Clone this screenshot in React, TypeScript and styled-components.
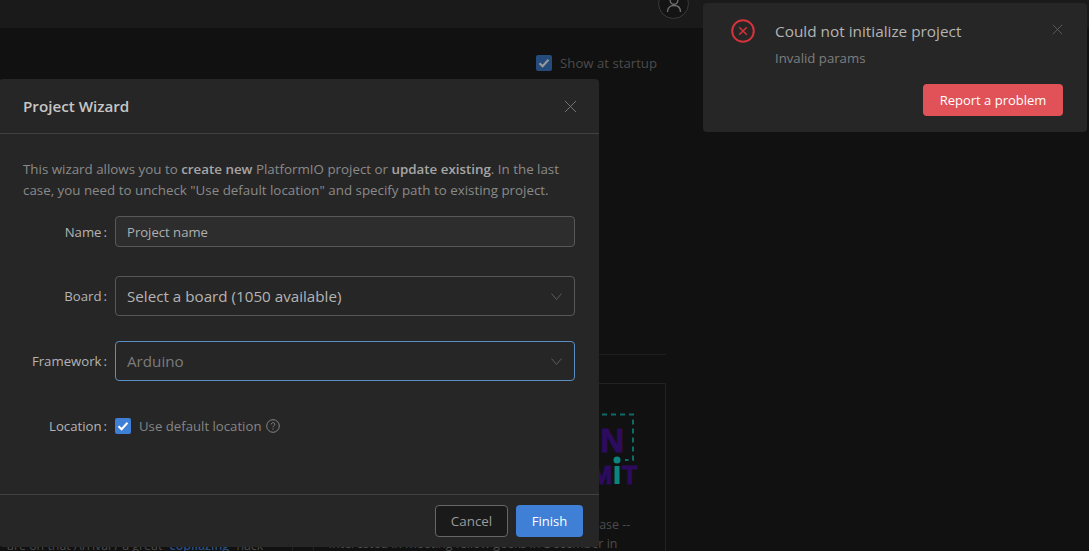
import React from "react";
import styled, { createGlobalStyle } from "styled-components";

const Global = createGlobalStyle`
  html, body { margin: 0; padding: 0; background: #111; }
  #root { height: 551px; }
  * { box-sizing: border-box; }
`;

const Page = styled.div`
  position: relative;
  width: 1089px;
  height: 551px;
  overflow: hidden;
  background: #111111;
  font-family: "Open Sans", "Noto Sans", sans-serif;
  font-size: 13.2px;
`;

const TopBar = styled.header`
  display: flex;
  justify-content: flex-end;
  align-items: flex-end;
  height: 28px;
  padding: 0 400px 9px 0;
  background: #1a1a1a;
  overflow: hidden;
`;

const Avatar = styled.div`
  display: flex;
  flex: none;
  align-items: center;
  justify-content: center;
  width: 31px;
  height: 31px;
  border: 1px solid #3a3a3a;
  border-radius: 50%;
  background: #141414;
  color: #6e6e6e;
`;

const Main = styled.main`
  width: 666px;
  padding-top: 27px;
`;

const StartupRow = styled.label`
  display: flex;
  align-items: center;
  justify-content: flex-end;
  gap: 8px;
  height: 16px;
  padding-right: 9px;
  color: #4c4c4c;
  font-size: 13.2px;
`;

const Check = styled.span<{ $dim?: boolean }>`
  display: flex;
  flex: none;
  align-items: center;
  justify-content: center;
  width: 16px;
  height: 16px;
  border-radius: 2px;
  background: ${(p) => (p.$dim ? "#254a7c" : "#3f7fd6")};
  color: ${(p) => (p.$dim ? "#9a9a9a" : "#ffffff")};
`;

const Divider = styled.hr`
  margin: 283px 0 28px;
  border: 0;
  border-top: 1px solid #1f1f1f;
`;

const NewsGrid = styled.section`
  display: grid;
  grid-template-columns: 293px 373px;
  grid-template-rows: 170px;
`;

const NewsCard = styled.article`
  padding: 153px 0 0 7px;
  border-right: 1px solid #222222;
  color: #4c4c4c;
  font-size: 12.4px;
  line-height: 19px;
`;

const BoxedCard = styled.article`
  display: flex;
  flex-direction: column;
  justify-content: flex-end;
  margin-left: 20px;
  padding: 0 24px 0 15px;
  border-top: 1px solid #222222;
  border-left: 1px solid #222222;
  border-right: 1px solid #222222;
  color: #4c4c4c;
  font-size: 12.4px;
  line-height: 19px;
`;

const LogoWrap = styled.div`
  display: flex;
  justify-content: flex-end;
  margin: 0 2px 24px 0;
`;

const NewsText = styled.p`
  margin: 0;
  white-space: nowrap;
`;

const NewsLink = styled.a`
  color: #2a4f82;
  font-weight: 600;
`;

const Dialog = styled.section`
  position: absolute;
  top: 79px;
  left: -1px;
  display: flex;
  flex-direction: column;
  width: 600px;
  height: 468px;
  border-radius: 4px;
  background: #262626;
  color: #c8c8c8;
`;

const DialogHeader = styled.div`
  display: flex;
  align-items: center;
  justify-content: space-between;
  height: 55px;
  padding: 0 22px 0 24px;
  border-bottom: 1px solid #414141;
`;

const DialogTitle = styled.h2`
  margin: 0;
  color: #c6c6c6;
  font-size: 15.2px;
  font-weight: 600;
`;

const IconButton = styled.button<{ $color: string }>`
  display: flex;
  padding: 0;
  border: 0;
  background: none;
  color: ${(p) => p.$color};
`;

const DialogBody = styled.div`
  flex: 1;
  padding: 25px 24px 0;
`;

const Intro = styled.p`
  margin: 0 0 15px;
  color: #8a8a8a;
  font-size: 13.35px;
  line-height: 21px;
  white-space: nowrap;

  strong {
    color: #a6a6a6;
    font-weight: 600;
  }
`;

const FormRow = styled.div<{ $mb: number; $mt?: number }>`
  display: flex;
  align-items: center;
  margin-top: ${(p) => p.$mt ?? 0}px;
  margin-bottom: ${(p) => p.$mb}px;
`;

const FieldLabel = styled.label`
  flex: none;
  width: 92px;
  margin-right: 8px;
  margin-left: -8px;
  color: #b4b4b4;
  font-size: 13.2px;
  text-align: right;
`;

const Colon = styled.span`
  margin-left: 2px;
`;

const TextInput = styled.div`
  display: flex;
  align-items: center;
  width: 460px;
  height: 31px;
  padding: 0 11px;
  border: 1px solid #585858;
  border-radius: 4px;
  background: #2d2d2d;
  color: #b0b0b0;
  font-size: 13.1px;
`;

const SelectBox = styled.div<{ $focused?: boolean }>`
  display: flex;
  align-items: center;
  justify-content: space-between;
  width: 460px;
  height: 40px;
  padding: 0 12px 0 11px;
  border: 1px solid ${(p) => (p.$focused ? "#5b8cc2" : "#585858")};
  border-radius: 4px;
  color: ${(p) => (p.$focused ? "#7b7b7b" : "#b4b4b4")};
  font-size: 15.2px;
`;

const Chevron = styled.span`
  display: flex;
  color: #5a5a5a;
`;

const CheckLine = styled.div`
  display: flex;
  align-items: center;
  gap: 8px;
  color: #858585;
  font-size: 13.2px;
`;

const HelpIcon = styled.span`
  display: flex;
  margin-left: -3px;
  color: #858585;
`;

const DialogFooter = styled.div`
  display: flex;
  justify-content: flex-end;
  gap: 8px;
  height: 53px;
  padding: 10px 16px 0 0;
  border-top: 1px solid #414141;
`;

const Button = styled.button<{ $kind: "ghost" | "primary" | "danger" }>`
  height: 32px;
  padding: 0;
  border-radius: 4px;
  font-family: inherit;
  font-size: ${(p) => (p.$kind === "ghost" ? "13.4px" : "13px")};
  font-weight: ${(p) => (p.$kind === "ghost" ? 400 : 500)};
  color: ${(p) => (p.$kind === "ghost" ? "#9a9a9a" : "#ffffff")};
  border: ${(p) => (p.$kind === "ghost" ? "1px solid #666666" : "0")};
  background: ${(p) =>
    p.$kind === "ghost" ? "#1a1a1a" : p.$kind === "primary" ? "#3f7fd6" : "#e05257"};
  width: ${(p) => (p.$kind === "ghost" ? "73px" : p.$kind === "primary" ? "67px" : "140px")};
`;

const Toast = styled.aside`
  position: absolute;
  top: 3px;
  left: 703px;
  display: grid;
  grid-template-columns: 24px 1fr 12px;
  column-gap: 20px;
  width: 384px;
  height: 129px;
  padding: 16px 23px 0 28px;
  border-radius: 4px;
  background: #262626;
`;

const ToastIcon = styled.span`
  display: flex;
  color: #d4333b;
`;

const ToastBody = styled.div`
  display: flex;
  flex-direction: column;
`;

const ToastTitle = styled.div`
  color: #b4b4b4;
  font-size: 15.35px;
  line-height: 24px;
`;

const ToastText = styled.div`
  margin-top: 6px;
  color: #7e7e7e;
  font-size: 13.2px;
  line-height: 18px;
`;

const ToastAction = styled.div`
  display: flex;
  justify-content: flex-end;
  margin-top: 17px;
  margin-right: -31px;
`;

const ToastClose = styled.div`
  padding-top: 5px;
`;

const Cross = ({ size, sw = 1 }: { size: number; sw?: number }) => (
  <svg width={size} height={size} viewBox="0 0 14 14" fill="none" stroke="currentColor" strokeWidth={sw}>
    <path d="M1 1 13 13M13 1 1 13" />
  </svg>
);

const Tick = () => (
  <svg width="12" height="12" viewBox="0 0 12 12" fill="none" stroke="currentColor" strokeWidth="2">
    <path d="M1.500 6.200 4.600 9.200 10.500 2.800" />
  </svg>
);

const Down = () => (
  <svg width="11" height="7" viewBox="0 0 11 7" fill="none" stroke="currentColor" strokeWidth="1">
    <path d="M.5 .5 5.500 6.500 10.500 .5" />
  </svg>
);

const Logo = () => (
  <svg width="82" height="78" viewBox="0 0 82 78">
    <path d="M0 1.500H76V47H68" fill="none" stroke="#0c6b6b" strokeWidth="2" strokeDasharray="5 4" />
    <circle cx="60" cy="47" r="3.500" fill="#0c8580" />
    <rect x="57.500" y="53" width="5" height="18" fill="#0c8580" />
    <text x="67" y="39" textAnchor="end" fontFamily="Liberation Sans, sans-serif" fontWeight="700" fontSize="33" fill="#2d0b5e" stroke="#2d0b5e">GN</text>
    <text x="55" y="71" textAnchor="end" fontFamily="Liberation Sans, sans-serif" fontWeight="700" fontSize="25" fill="#2d0b5e" stroke="#2d0b5e">M</text>
    <text x="65" y="71" fontFamily="Liberation Sans, sans-serif" fontWeight="700" fontSize="25" fill="#2d0b5e" stroke="#2d0b5e">T</text>
  </svg>
);

export default function App() {
  return (
    <Page>
      <Global />
      <TopBar>
        <Avatar>
          <svg width="18" height="18" viewBox="0 0 18 18" fill="none" stroke="currentColor" strokeWidth="1.400">
            <circle cx="9" cy="5.500" r="3.800" />
            <path d="M2.500 17c0-4 2.500-6.500 6.500-6.500s6.500 2.500 6.500 6.500" />
          </svg>
        </Avatar>
      </TopBar>
      <Main>
        <StartupRow>
          <Check $dim><Tick /></Check>
          Show at startup
        </StartupRow>
        <Divider />
        <NewsGrid>
          <NewsCard>
            <NewsText>
              are on that Arrival / a great <NewsLink>`copilazing`</NewsLink> hack
            </NewsText>
          </NewsCard>
          <BoxedCard>
            <LogoWrap><Logo /></LogoWrap>
            <NewsText>
              Registration for the summit is now opened, please --
              <br />
              interested in meeting fellow geeks in December in
            </NewsText>
          </BoxedCard>
        </NewsGrid>
      </Main>

      <Dialog>
        <DialogHeader>
          <DialogTitle>Project Wizard</DialogTitle>
          <IconButton $color="#7a7a7a"><Cross size={13} /></IconButton>
        </DialogHeader>
        <DialogBody>
          <Intro>
            This wizard allows you to <strong>create new</strong> PlatformIO project or{" "}
            <strong>update existing</strong>. In the last
            <br />
            case, you need to uncheck "Use default location" and specify path to existing project.
          </Intro>
          <FormRow $mb={29}>
            <FieldLabel>Name<Colon>:</Colon></FieldLabel>
            <TextInput>Project name</TextInput>
          </FormRow>
          <FormRow $mb={25}>
            <FieldLabel>Board<Colon>:</Colon></FieldLabel>
            <SelectBox>
              Select a board (1050 available)
              <Chevron><Down /></Chevron>
            </SelectBox>
          </FormRow>
          <FormRow $mb={0}>
            <FieldLabel>Framework<Colon>:</Colon></FieldLabel>
            <SelectBox $focused>
              Arduino
              <Chevron><Down /></Chevron>
            </SelectBox>
          </FormRow>
          <FormRow $mb={0} $mt={36}>
            <FieldLabel>Location<Colon>:</Colon></FieldLabel>
            <CheckLine>
              <Check><Tick /></Check>
              Use default location
              <HelpIcon>
                <svg width="14" height="14" viewBox="0 0 14 14" fill="none" stroke="currentColor">
                  <circle cx="7" cy="7" r="6.300" />
                  <path d="M5.200 5.400c0-1 .8-1.700 1.800-1.700s1.800.7 1.800 1.600c0 1.500-1.800 1.400-1.800 3" />
                  <path d="M7 9.500v1.200" />
                </svg>
              </HelpIcon>
            </CheckLine>
          </FormRow>
        </DialogBody>
        <DialogFooter>
          <Button $kind="ghost">Cancel</Button>
          <Button $kind="primary">Finish</Button>
        </DialogFooter>
      </Dialog>

      <Toast>
        <ToastIcon>
          <svg width="24" height="24" viewBox="0 0 24 24" fill="none" stroke="currentColor" strokeWidth="2">
            <circle cx="12" cy="12" r="10.800" />
            <path d="M8.200 8.200 15.800 15.800M15.800 8.200 8.200 15.800" strokeWidth="1.500" />
          </svg>
        </ToastIcon>
        <ToastBody>
          <ToastTitle>Could not initialize project</ToastTitle>
          <ToastText>Invalid params</ToastText>
          <ToastAction>
            <Button $kind="danger">Report a problem</Button>
          </ToastAction>
        </ToastBody>
        <ToastClose>
          <IconButton $color="#666666"><Cross size={11} /></IconButton>
        </ToastClose>
      </Toast>
    </Page>
  );
}
